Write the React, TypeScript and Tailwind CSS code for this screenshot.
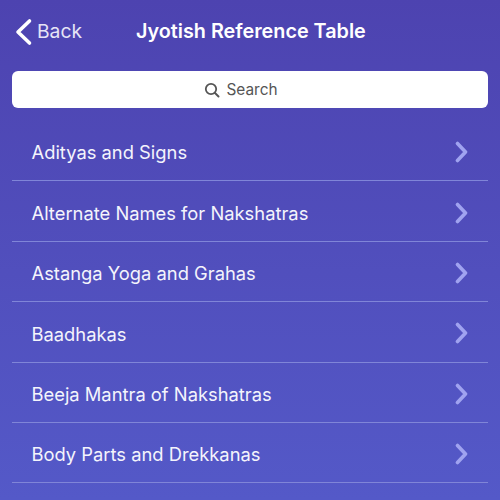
const items = [
  "Adityas and Signs",
  "Alternate Names for Nakshatras",
  "Astanga Yoga and Grahas",
  "Baadhakas",
  "Beeja Mantra of Nakshatras",
  "Body Parts and Drekkanas",
];

export default function App() {
  return (
    <div className="h-[500px] w-[500px] overflow-hidden bg-gradient-to-b from-[#4d43b0] to-[#5459c8] font-['Inter',sans-serif] text-white">
      <div className="flex h-[63px] items-center pl-[14px]">
        <div className="flex w-[122px] items-center gap-[4px]">
          <svg width="19" height="28" viewBox="0 0 19 28" fill="none">
            <path d="M15.5 3 L4 14 L15.5 25" stroke="white" strokeWidth="3.6" strokeLinecap="round" strokeLinejoin="round" />
          </svg>
          <span className="text-[19.3px] text-[#e6e4f6]">Back</span>
        </div>
        <div className="text-[19.8px] font-semibold">Jyotish Reference Table</div>
      </div>
      <div className="mx-3 mt-[8px] flex h-[37px] items-center justify-center gap-[6px] rounded-[6px] bg-white pr-[18px] text-[#555]">
        <svg width="16" height="16" viewBox="0 0 16 16" fill="none">
          <circle cx="7" cy="7" r="5.2" stroke="currentColor" strokeWidth="1.8" />
          <path d="M11 11 L14.5 14.5" stroke="currentColor" strokeWidth="2" strokeLinecap="round" />
        </svg>
        <span className="text-[15.4px]">Search</span>
      </div>
      <div className="mx-3 mt-[13px]">
        {items.map((item) => (
          <div key={item} className="flex h-[60.4px] items-center justify-between border-b border-[#8085d8] pt-[5px] pl-[19.5px] pr-[20px]">
            <span className="text-[18.35px] text-[#f4f4fc]">{item}</span>
            <svg width="13" height="22" viewBox="0 0 13 22" fill="none" className="-translate-y-px">
              <path d="M2.5 2.5 L10.5 11 L2.5 19.5" stroke="#a0a3f0" strokeWidth="3.6" strokeLinecap="round" strokeLinejoin="round" />
            </svg>
          </div>
        ))}
      </div>
    </div>
  );
}
